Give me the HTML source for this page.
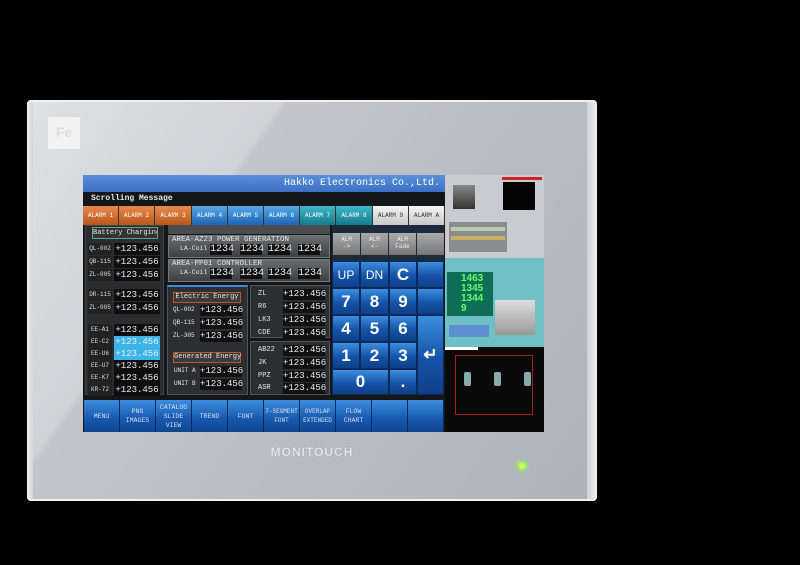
<!DOCTYPE html><html><head><style>
*{margin:0;padding:0;box-sizing:border-box}
body{width:800px;height:565px;background:#000;position:relative;overflow:hidden;font-family:"Liberation Mono",monospace}
.a{position:absolute}
.bz{left:27px;top:100px;width:570px;height:401px;border-radius:4px;background:linear-gradient(125deg,#dfe1e4 0%,#cfd2d6 30%,#c2c6cb 31%,#b8bdc3 60%,#aeb3ba 100%);box-shadow:inset 0 0 0 2px #eef0f2}
.t{color:#e8e8e8;font-size:9px;white-space:nowrap}
.v{background:#111;color:#eee;font-size:10px;text-align:center;line-height:11px}
.k{background:linear-gradient(#3c8ee0,#1553a8 55%,#0f3f88);color:#fff;font-family:"Liberation Sans",sans-serif;font-weight:bold;font-size:17px;display:flex;align-items:center;justify-content:center;border:1px solid #0a2a5a}
.al{height:19px;top:206px;font-size:6px;color:#fff;display:flex;align-items:center;justify-content:center;border-right:1px solid #333}
.bb{top:400px;height:32px;background:linear-gradient(#3d8ee0,#1658ad 60%,#0f4590);color:#dde;font-size:6.5px;text-align:center;display:flex;align-items:center;justify-content:center;line-height:9px;border-right:1px solid #0a2a5a}
.row{left:88px;width:72px;height:12px;display:flex;gap:2px}
.row span{font-size:6px;color:#ddd;width:24px;text-align:center;line-height:12px;background:#222;white-space:nowrap;overflow:hidden}
.row b{flex:1;font-weight:normal;font-size:9px;color:#eee;background:#0e0e0e;line-height:12px;text-align:center;white-space:nowrap}
</style></head><body>
<div class="a bz"></div>
<div class="a" style="left:587px;top:102px;width:8px;height:397px;background:linear-gradient(90deg,#cfd2d6,#e6e8ea)"></div>
<div class="a" style="left:29px;top:102px;width:4px;height:397px;background:linear-gradient(90deg,#e6e8ea,#d4d6d9)"></div>
<div class="a" style="left:48px;top:117px;width:32px;height:32px;background:#f2f2f2;color:#ddd;font:bold 14px 'Liberation Sans',sans-serif;text-align:center;line-height:30px">Fe</div>
<div class="a" style="left:83px;top:175px;width:461px;height:257px;background:#141618"></div>
<div class="a" style="left:83px;top:175px;width:362px;height:17px;background:linear-gradient(#5c8fd8,#3b6fc4);color:#fff;font-size:10px;text-align:right;padding-right:5px;line-height:17px">Hakko Electronics Co.,Ltd.</div>
<div class="a t" style="left:91px;top:194px;font-size:8px;font-weight:bold">Scrolling Message</div>
<div class="a al" style="left:83px;width:36px;background:linear-gradient(#e98a4a,#b8561e)">ALARM 1</div>
<div class="a al" style="left:119px;width:36px;background:linear-gradient(#e98a4a,#b8561e)">ALARM 2</div>
<div class="a al" style="left:155px;width:37px;background:linear-gradient(#e98a4a,#b8561e)">ALARM 3</div>
<div class="a al" style="left:192px;width:36px;background:linear-gradient(#58a8e8,#1d64b4)">ALARM 4</div>
<div class="a al" style="left:228px;width:36px;background:linear-gradient(#58a8e8,#1d64b4)">ALARM 5</div>
<div class="a al" style="left:264px;width:36px;background:linear-gradient(#58a8e8,#1d64b4)">ALARM 6</div>
<div class="a al" style="left:300px;width:36px;background:linear-gradient(#3bb8c8,#157a8c)">ALARM 7</div>
<div class="a al" style="left:336px;width:37px;background:linear-gradient(#3bb8c8,#157a8c)">ALARM 8</div>
<div class="a al" style="left:373px;width:36px;background:linear-gradient(#f4f4f4,#c8c8c8);color:#333">ALARM 9</div>
<div class="a al" style="left:409px;width:36px;background:linear-gradient(#f4f4f4,#c8c8c8);color:#333">ALARM A</div>
<div class="a" style="left:85px;top:225px;width:79px;height:170px;background:#2a2c2f;border:1px solid #444"></div>
<div class="a t" style="left:92px;top:227px;width:66px;height:12px;border:1px solid #5a8;font-size:7px;text-align:center;line-height:10px;background:#333;overflow:hidden">Battery Charging</div>
<div class="a row" style="top:243px"><span>QL-002</span><b>+123.456</b></div>
<div class="a row" style="top:256px"><span>QB-115</span><b>+123.456</b></div>
<div class="a row" style="top:269px"><span>ZL-005</span><b>+123.456</b></div>
<div class="a row" style="top:289px"><span>DR-115</span><b>+123.456</b></div>
<div class="a row" style="top:302px"><span>ZL-005</span><b>+123.456</b></div>
<div class="a row" style="top:324px"><span>EE-A1</span><b>+123.456</b></div>
<div class="a row" style="top:336px"><span>EE-C2</span><b style="background:#3cb4e8">+123.456</b></div>
<div class="a row" style="top:348px"><span>EE-U6</span><b style="background:#3cb4e8">+123.456</b></div>
<div class="a row" style="top:360px"><span>EE-U7</span><b>+123.456</b></div>
<div class="a row" style="top:372px"><span>EE-K7</span><b>+123.456</b></div>
<div class="a row" style="top:384px"><span>KR-72</span><b>+123.456</b></div>
<div class="a" style="left:168px;top:225px;width:162px;height:9px;background:#4a4c50"></div>
<div class="a" style="left:168px;top:235px;width:162px;height:23px;background:linear-gradient(#6a6c70,#3e4044);border:1px solid #777"></div>
<div class="a t" style="left:172px;top:236px;font-size:7.5px">AREA-AZ23 POWER GENERATION</div>
<div class="a t" style="left:180px;top:245px;font-size:6.5px">LA-Coil</div>
<div class="a v" style="left:210px;top:244px;width:22px">1234</div><div class="a v" style="left:240px;top:244px;width:22px">1234</div><div class="a v" style="left:268px;top:244px;width:22px">1234</div><div class="a v" style="left:298px;top:244px;width:22px">1234</div>
<div class="a" style="left:168px;top:259px;width:162px;height:23px;background:linear-gradient(#6a6c70,#3e4044);border:1px solid #777"></div>
<div class="a t" style="left:172px;top:260px;font-size:7.5px">AREA-PP01 CONTROLLER</div>
<div class="a t" style="left:180px;top:269px;font-size:6.5px">LA-Coil</div>
<div class="a v" style="left:210px;top:268px;width:22px">1234</div><div class="a v" style="left:240px;top:268px;width:22px">1234</div><div class="a v" style="left:268px;top:268px;width:22px">1234</div><div class="a v" style="left:298px;top:268px;width:22px">1234</div>
<div class="a" style="left:167px;top:285px;width:81px;height:110px;background:#2c2e31;border:1px solid #555;border-top:2px solid #3a8ad8"></div>
<div class="a t" style="left:173px;top:292px;width:68px;height:11px;border:1px solid #b85a2a;font-size:7px;text-align:center;line-height:9px;background:#3a3a3a">Electric Energy</div>
<div class="a t" style="left:173px;top:306px;font-size:6px">QL-002</div><div class="a v" style="left:200px;top:305px;width:42px;font-size:9px">+123.456</div>
<div class="a t" style="left:173px;top:319px;font-size:6px">QB-115</div><div class="a v" style="left:200px;top:318px;width:42px;font-size:9px">+123.456</div>
<div class="a t" style="left:173px;top:332px;font-size:6px">ZL-305</div><div class="a v" style="left:200px;top:331px;width:42px;font-size:9px">+123.456</div>
<div class="a t" style="left:173px;top:352px;width:68px;height:11px;border:1px solid #b85a2a;font-size:7px;text-align:center;line-height:9px;background:#3a3a3a">Generated Energy</div>
<div class="a t" style="left:174px;top:367px;font-size:6px">UNIT A</div><div class="a v" style="left:200px;top:366px;width:42px;font-size:9px">+123.456</div>
<div class="a t" style="left:174px;top:380px;font-size:6px">UNIT B</div><div class="a v" style="left:200px;top:379px;width:42px;font-size:9px">+123.456</div>
<div class="a" style="left:250px;top:285px;width:80px;height:53px;background:#2c2e31;border:1px solid #555"></div>
<div class="a" style="left:250px;top:341px;width:80px;height:54px;background:#2c2e31;border:1px solid #555"></div>
<div class="a t" style="left:258px;top:290px;font-size:7px">ZL</div><div class="a v" style="left:283px;top:289px;width:42px;font-size:9px">+123.456</div>
<div class="a t" style="left:258px;top:303px;font-size:7px">R6</div><div class="a v" style="left:283px;top:302px;width:42px;font-size:9px">+123.456</div>
<div class="a t" style="left:258px;top:316px;font-size:7px">LK3</div><div class="a v" style="left:283px;top:315px;width:42px;font-size:9px">+123.456</div>
<div class="a t" style="left:258px;top:329px;font-size:7px">CDE</div><div class="a v" style="left:283px;top:328px;width:42px;font-size:9px">+123.456</div>
<div class="a t" style="left:258px;top:346px;font-size:7px">AB22</div><div class="a v" style="left:283px;top:345px;width:42px;font-size:9px">+123.456</div>
<div class="a t" style="left:258px;top:359px;font-size:7px">JK</div><div class="a v" style="left:283px;top:358px;width:42px;font-size:9px">+123.456</div>
<div class="a t" style="left:258px;top:372px;font-size:7px">PPZ</div><div class="a v" style="left:283px;top:371px;width:42px;font-size:9px">+123.456</div>
<div class="a t" style="left:258px;top:384px;font-size:7px">ASR</div><div class="a v" style="left:283px;top:383px;width:42px;font-size:9px">+123.456</div>
<div class="a" style="left:332px;top:225px;width:112px;height:170px;background:#1c2a3c"></div>
<div class="a" style="left:333px;top:233px;width:27px;height:22px;background:linear-gradient(#aaa,#777);color:#eee;font-size:6px;text-align:center;padding-top:3px">ALM<br>-&gt;</div>
<div class="a" style="left:361px;top:233px;width:27px;height:22px;background:linear-gradient(#aaa,#777);color:#eee;font-size:6px;text-align:center;padding-top:3px">ALM<br>&lt;-</div>
<div class="a" style="left:389px;top:233px;width:27px;height:22px;background:linear-gradient(#aaa,#777);color:#eee;font-size:6px;text-align:center;padding-top:3px">ALM<br>Fade</div>
<div class="a" style="left:417px;top:233px;width:27px;height:22px;background:linear-gradient(#aaa,#777)"></div>
<div class="a k" style="left:332px;top:261px;width:28px;height:27px;font-size:12px;font-weight:normal">UP</div>
<div class="a k" style="left:360px;top:261px;width:29px;height:27px;font-size:12px;font-weight:normal">DN</div>
<div class="a k" style="left:389px;top:261px;width:28px;height:27px">C</div>
<div class="a k" style="left:417px;top:261px;width:27px;height:27px"></div>
<div class="a k" style="left:332px;top:288px;width:28px;height:27px">7</div>
<div class="a k" style="left:360px;top:288px;width:29px;height:27px">8</div>
<div class="a k" style="left:389px;top:288px;width:28px;height:27px">9</div>
<div class="a k" style="left:417px;top:288px;width:27px;height:27px"></div>
<div class="a k" style="left:332px;top:315px;width:28px;height:27px">4</div>
<div class="a k" style="left:360px;top:315px;width:29px;height:27px">5</div>
<div class="a k" style="left:389px;top:315px;width:28px;height:27px">6</div>
<div class="a k" style="left:417px;top:315px;width:27px;height:80px">↵</div>
<div class="a k" style="left:332px;top:342px;width:28px;height:27px">1</div>
<div class="a k" style="left:360px;top:342px;width:29px;height:27px">2</div>
<div class="a k" style="left:389px;top:342px;width:28px;height:27px">3</div>
<div class="a k" style="left:332px;top:369px;width:57px;height:26px">0</div>
<div class="a k" style="left:389px;top:369px;width:28px;height:26px">.</div>
<div class="a bb" style="left:84px;width:36px">MENU</div>
<div class="a bb" style="left:120px;width:36px">PNG<br>IMAGES</div>
<div class="a bb" style="left:156px;width:36px">CATALOG<br>SLIDE<br>VIEW</div>
<div class="a bb" style="left:192px;width:36px">TREND</div>
<div class="a bb" style="left:228px;width:36px">FONT</div>
<div class="a bb" style="left:264px;width:36px;font-size:6px">7-SEGMENT<br>FONT</div>
<div class="a bb" style="left:300px;width:36px;font-size:6px">OVERLAP<br>EXTENDED</div>
<div class="a bb" style="left:336px;width:36px">FLOW<br>CHART</div>
<div class="a bb" style="left:372px;width:36px"></div>
<div class="a bb" style="left:408px;width:36px"></div>
<div class="a" style="left:445px;top:175px;width:99px;height:83px;background:#c9cbd0"></div>
<div class="a" style="left:453px;top:185px;width:22px;height:24px;background:linear-gradient(#888,#333)"></div>
<div class="a" style="left:503px;top:182px;width:32px;height:28px;background:#050505"></div>
<div class="a" style="left:502px;top:177px;width:40px;height:3px;background:#c22"></div>
<div class="a" style="left:449px;top:222px;width:58px;height:30px;background:#8a8c90"></div>
<div class="a" style="left:451px;top:227px;width:54px;height:4px;background:#bca"></div>
<div class="a" style="left:451px;top:236px;width:54px;height:4px;background:#c8b060"></div>
<div class="a" style="left:445px;top:258px;width:99px;height:89px;background:#6ec0c4"></div>
<div class="a" style="left:447px;top:272px;width:46px;height:44px;background:#0f6e58;color:#6f6;font:bold 10px 'Liberation Sans';line-height:10px;padding:2px 0 0 14px">1463<br>1345<br>1344<br>9</div>
<div class="a" style="left:495px;top:300px;width:40px;height:35px;background:linear-gradient(#ddd,#999)"></div>
<div class="a" style="left:449px;top:325px;width:40px;height:12px;background:#5a8fd0"></div>
<div class="a" style="left:445px;top:347px;width:99px;height:85px;background:#0a0a0a"></div>
<div class="a" style="left:455px;top:355px;width:78px;height:60px;border:1px solid #a02020"></div>
<div class="a" style="left:464px;top:372px;width:7px;height:14px;background:#8aa;border-radius:2px"></div>
<div class="a" style="left:494px;top:372px;width:7px;height:14px;background:#8aa;border-radius:2px"></div>
<div class="a" style="left:524px;top:372px;width:7px;height:14px;background:#8aa;border-radius:2px"></div>
<div class="a" style="left:445px;top:347px;width:33px;height:3px;background:#fff"></div>
<div class="a" style="left:262px;top:445px;width:100px;text-align:center;color:#e2e4e6;font:bold 12px 'Liberation Sans',sans-serif;letter-spacing:1px;text-shadow:0 0 1px #8a8e94">MONITOUCH</div>
<div class="a" style="left:519px;top:463px;width:6px;height:6px;border-radius:50%;background:#c8ff60;box-shadow:0 0 4px 2px #9f4"></div>
</body></html>
